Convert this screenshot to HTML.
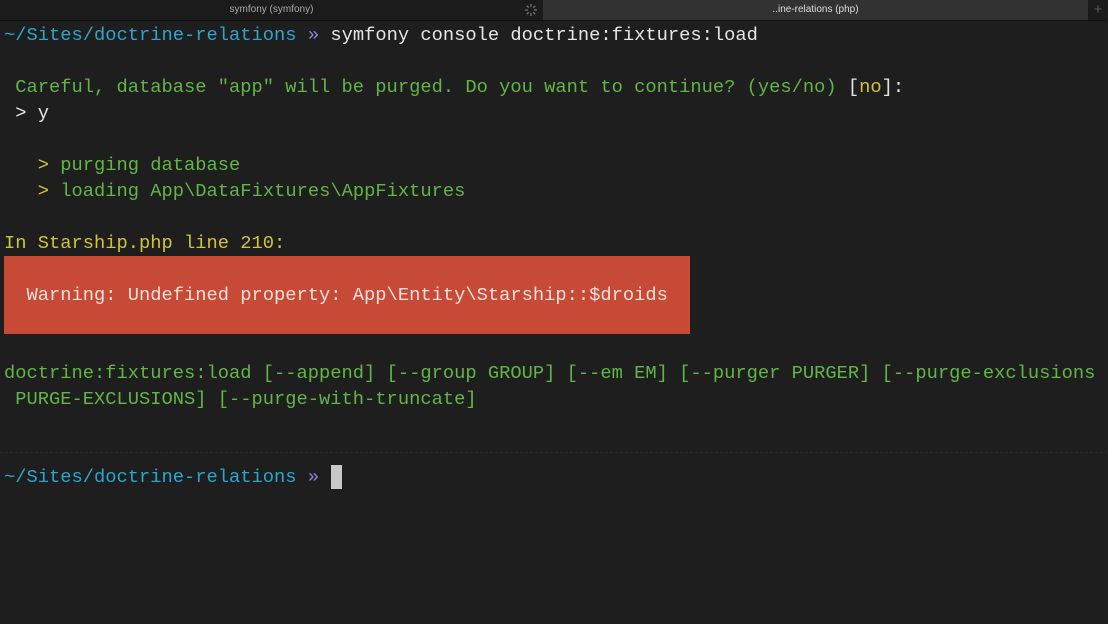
<!DOCTYPE html>
<html><head><meta charset="utf-8"><style>
html,body{margin:0;padding:0;}
body{width:1108px;height:624px;background:#1e1e1e;overflow:hidden;position:relative;font-family:"Liberation Mono","DejaVu Sans Mono",monospace;}
.tabs{position:absolute;left:0;top:0;width:1108px;height:20px;background:#181818;border-bottom:1px solid #111;}
.tab{position:absolute;top:0;height:20px;line-height:20px;font-family:"Liberation Sans",sans-serif;font-size:10px;color:#bbb;text-align:center;}
.t1{left:0;width:543px;background:#1b1b1b;color:#aaa;}
.t2{left:543px;width:545px;background:#323232;color:#ddd;}
.plus{position:absolute;left:1088px;top:0;width:20px;height:20px;background:#1b1b1b;color:#555;font-family:"Liberation Sans",sans-serif;font-size:15px;line-height:20px;text-align:center;}
.l{position:absolute;left:4px;white-space:pre;font-size:18.75px;line-height:26px;height:26px;color:#e6e6e6;}
.c{color:#2ba6cc}.g{color:#62b547}.y{color:#d2c437}.p{color:#8c84e6}.w{color:#e6e6e6}
.red{position:absolute;left:4px;top:256px;width:686px;height:78px;background:#c74a36;}
.cur{position:absolute;left:331px;top:465px;width:11px;height:24px;background:#c8c8c8;}
.dash{position:absolute;left:0;top:452px;width:1108px;border-top:1px dashed #2a2a2a;}
</style></head><body>
<div class="tabs">
<div class="tab t1">symfony (symfony)</div>
<svg style="position:absolute;left:524px;top:3px" width="14" height="14" viewBox="0 0 14 14" stroke="#777" stroke-width="1.3"><path d="M7 1v3M7 10v3M1 7h3M10 7h3M2.8 2.8l2 2M9.2 9.2l2 2M2.8 11.2l2-2M9.2 4.8l2-2"/></svg>
<div class="tab t2">..ine-relations (php)</div>
<div class="plus">+</div>
</div>
<div class="l" style="top:22px"><span class="c">~/Sites/doctrine-relations</span> <span class="p">»</span> symfony console doctrine:fixtures:load</div>
<div class="l g" style="top:74px"> Careful, database "app" will be purged. Do you want to continue? (yes/no) <span class="w">[</span><span class="y">no</span><span class="w">]:</span></div>
<div class="l" style="top:100px"> &gt; y</div>
<div class="l g" style="top:152px">   <span class="y">&gt;</span> purging database</div>
<div class="l g" style="top:178px">   <span class="y">&gt;</span> loading App\DataFixtures\AppFixtures</div>
<div class="l y" style="top:230px">In Starship.php line 210:</div>
<div class="red"></div>
<div class="l" style="top:282px;color:#f0e0dc">  Warning: Undefined property: App\Entity\Starship::$droids</div>
<div class="l g" style="top:360px">doctrine:fixtures:load [--append] [--group GROUP] [--em EM] [--purger PURGER] [--purge-exclusions</div>
<div class="l g" style="top:386px"> PURGE-EXCLUSIONS] [--purge-with-truncate]</div>
<div class="dash"></div>
<div class="l" style="top:464px"><span class="c">~/Sites/doctrine-relations</span> <span class="p">»</span></div>
<div class="cur"></div>
</body></html>
